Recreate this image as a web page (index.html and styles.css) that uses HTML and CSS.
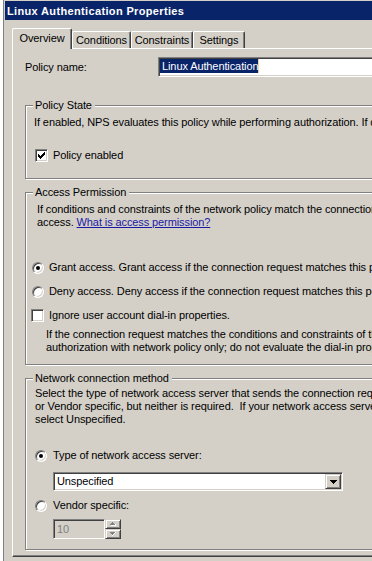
FILE: index.html
```html
<!DOCTYPE html>
<html>
<head>
<meta charset="utf-8">
<title>Linux Authentication Properties</title>
<link rel="stylesheet" href="styles.css">
</head>
<body>
<div class="screen">
  <div class="backwin"></div>
  <div class="window">
    <div class="titlebar">Linux Authentication Properties</div>
    <div class="client">
      <div class="tabs">
        <div class="tab tab-overview active">Overview</div>
        <div class="tab tab-conditions">Conditions</div>
        <div class="tab tab-constraints">Constraints</div>
        <div class="tab tab-settings">Settings</div>
      </div>
      <div class="panel">
        <div class="name-row">
          <span class="name-label">Policy name:</span>
          <div class="edit"><span class="selection">Linux Authentication</span></div>
        </div>

        <fieldset class="group group-state">
          <legend>Policy State</legend>
          <div class="state-body">
            <p class="line">If enabled, NPS evaluates this policy while performing authorization. If disabled, NPS does not evaluate this policy.</p>
            <div class="check-row state-check">
              <span class="checkbox"><svg class="checkmark" width="11" height="11" viewBox="0 0 11 11"><path d="M2 4h1v3H2z M3 5h1v3H3z M4 6h1v3H4z M5 5h1v3H5z M6 4h1v3H6z M7 3h1v3H7z M8 2h1v3H8z"/></svg></span>
              <span class="line">Policy enabled</span>
            </div>
          </div>
        </fieldset>

        <fieldset class="group group-access">
          <legend>Access Permission</legend>
          <div class="access-body">
            <div class="intro">
              <p class="line">If conditions and constraints of the network policy match the connection request, the policy can either grant access or deny</p>
              <p class="line">access. <a class="link" href="#">What is access permission?</a></p>
            </div>
            <div class="radio-row grant-row">
              <span class="radio checked"></span>
              <span class="line">Grant access. Grant access if the connection request matches this policy.</span>
            </div>
            <div class="radio-row deny-row">
              <span class="radio"></span>
              <span class="line">Deny access. Deny access if the connection request matches this policy.</span>
            </div>
            <div class="check-row ignore-row">
              <span class="checkbox"></span>
              <span class="line">Ignore user account dial-in properties.</span>
            </div>
            <div class="desc">
              <p class="line">If the connection request matches the conditions and constraints of this network policy and the policy grants access, perform</p>
              <p class="line">authorization with network policy only; do not evaluate the dial-in properties of user accounts.</p>
            </div>
          </div>
        </fieldset>

        <fieldset class="group group-network">
          <legend>Network connection method</legend>
          <div class="network-body">
            <p class="line">Select the type of network access server that sends the connection request to NPS. You can select either the network access server type</p>
            <p class="line">or Vendor specific, but neither is required.&nbsp; If your network access server is an 802.1X authenticating switch or wireless access point,</p>
            <p class="line">select Unspecified.</p>
            <div class="radio-row net-row type-row">
              <span class="radio checked"></span>
              <span class="line">Type of network access server:</span>
            </div>
            <div class="combo">
              <span class="combo-text">Unspecified</span>
              <span class="combo-btn"><svg width="7" height="4" viewBox="0 0 7 4"><path d="M0 0h7v1H0z M1 1h5v1H1z M2 2h3v1H2z M3 3h1v1H3z"/></svg></span>
            </div>
            <div class="radio-row net-row vendor-row">
              <span class="radio"></span>
              <span class="line">Vendor specific:</span>
            </div>
            <div class="spinner">
              <span class="spin-edit">10</span>
              <span class="spin-btns">
                <span class="spin-btn"><svg class="spin-arrow" width="6" height="4" viewBox="0 0 6 4"><path d="M2 0h1v1H2z M1 1h3v1H1z M0 2h5v1H0z" fill="#808080"/><path d="M5 2h1v1H5z M1 3h5v1H1z" fill="#fff"/></svg></span>
                <span class="spin-btn"><svg class="spin-arrow" width="6" height="4" viewBox="0 0 6 4"><path d="M0 0h5v1H0z M1 1h3v1H1z M2 2h1v1H2z" fill="#808080"/><path d="M5 0h1v1H5z M4 1h1v1H4z M3 2h1v1H3z M2 3h1v1H2z" fill="#fff"/></svg></span>
              </span>
            </div>
          </div>
        </fieldset>
      </div>
    </div>
  </div>
</div>
</body>
</html>
```

FILE: styles.css
```css
* {
  box-sizing: border-box;
}

html,
body {
  margin: 0;
  padding: 0;
}

body {
  width: 372px;
  height: 561px;
  overflow: hidden;
  background: #d4d0c8;
  font-family: "Liberation Sans", Arial, sans-serif;
  font-size: 11px;
  line-height: 13px;
  letter-spacing: -0.1px;
  color: #000;
}

.screen {
  display: flex;
  height: 561px;
}

.backwin {
  flex: 0 0 4px;
  background: #fff;
  border-right: 1px solid #808080;
}

.window {
  flex: 0 0 560px;
  padding: 1px 0 0 1px;
  background: #d4d0c8;
}

.titlebar {
  height: 19px;
  padding: 2px 0 0 2px;
  line-height: 17px;
  background: #0a246a;
  color: #fff;
  font-weight: bold;
  letter-spacing: 0.35px;
  white-space: nowrap;
}

.client {
  padding: 8px 0 0 7px;
}

/* tabs */
.tabs {
  display: flex;
  align-items: flex-end;
  height: 20px;
}

.tab {
  height: 17px;
  padding-top: 2px;
  border-top: 1px solid #fff;
  border-left: 1px solid #fff;
  border-right: 1px solid #404040;
  border-radius: 2px 2px 0 0;
  box-shadow: inset -1px 0 #808080;
  text-align: center;
  white-space: nowrap;
}

.tab.active {
  position: relative;
  z-index: 1;
  height: 21px;
  padding-top: 3px;
  margin-bottom: -1px;
  background: #d4d0c8;
}

.tab-overview { width: 60px; }
.tab-conditions { width: 59px; }
.tab-constraints { width: 62px; }
.tab-settings { width: 52px; }

/* tab page */
.panel {
  width: 540px;
  padding: 8px 0 6px 12px;
  border-top: 1px solid #fff;
  border-left: 1px solid #fff;
  border-bottom: 1px solid #404040;
  box-shadow: inset 0 -1px #808080;
}

.line {
  margin: 0;
  white-space: nowrap;
}

.name-row {
  display: flex;
  align-items: center;
  height: 20px;
}

.name-label {
  flex: 0 0 133px;
  white-space: nowrap;
}

.edit {
  flex: 0 0 380px;
  height: 20px;
  padding: 1px 0 0 1px;
  border: 1px solid;
  border-color: #808080 #fff #fff #808080;
  box-shadow: inset 1px 1px #404040, inset -1px -1px #d4d0c8;
  background: #fff;
}

.selection {
  display: inline-block;
  vertical-align: top;
  height: 14px;
  line-height: 15px;
  padding: 0 0 0 2px;
  background: #0a246a;
  color: #fff;
  border-right: 1px solid #e8d8a0;
  white-space: nowrap;
}

/* group boxes */
.group {
  width: 420px;
  min-width: 0;
  margin: 0;
  padding: 0;
  border: 1px solid #808080;
  box-shadow: inset 1px 1px #fff, 1px 1px #fff;
}

.group legend {
  margin-left: 7px;
  padding: 0 3px 0 2px;
  line-height: 13px;
  background: #d4d0c8;
  white-space: nowrap;
}

.group-state { margin-top: 22px; }
.group-access { margin-top: 7px; }
.group-network { margin-top: 7px; }

.state-body {
  padding: 4px 0 16px 8px;
}

.state-check {
  margin: 20px 0 0 1px;
}

.access-body {
  padding: 4px 0 10px 5px;
}

.intro {
  margin-left: 6px;
}

.link {
  color: #1a1aa6;
  text-decoration: underline;
}

.grant-row {
  margin: 32px 0 0 1px;
}

.deny-row {
  margin: 11px 0 0 1px;
}

.ignore-row {
  margin-top: 11px;
}

.desc {
  margin: 6px 0 0 15px;
}

.network-body {
  padding: 2px 0 10px 9px;
}

.type-row {
  margin-top: 23px;
}

.vendor-row {
  margin-top: 8px;
}

/* controls */
.check-row,
.radio-row {
  display: flex;
  align-items: center;
  height: 13px;
  gap: 5px;
}

.net-row {
  gap: 6px;
}

.checkbox {
  flex: 0 0 13px;
  height: 13px;
  border: 1px solid;
  border-color: #808080 #fff #fff #808080;
  box-shadow: inset 1px 1px #404040, inset -1px -1px #d4d0c8;
  background: #fff;
}

.checkmark {
  display: block;
  fill: #000;
}

.radio {
  flex: 0 0 12px;
  height: 12px;
  display: flex;
  align-items: center;
  justify-content: center;
  border: 1px solid;
  border-color: #808080 #fff #fff #808080;
  border-radius: 50%;
  box-shadow: inset 1px 1px #404040, inset -1px -1px #d4d0c8;
  background: #fff;
}

.radio.checked::after {
  content: "";
  width: 4px;
  height: 4px;
  border-radius: 50%;
  background: #000;
}

.combo {
  display: flex;
  width: 290px;
  height: 19px;
  margin: 10px 0 0 18px;
  padding: 1px;
  border: 1px solid;
  border-color: #808080 #fff #fff #808080;
  box-shadow: inset 1px 1px #404040, inset -1px -1px #d4d0c8;
  background: #fff;
}

.combo-text {
  flex: 1;
  padding: 1px 0 0 2px;
  white-space: nowrap;
}

.combo-btn {
  flex: 0 0 16px;
  display: flex;
  align-items: center;
  justify-content: center;
  border: 1px solid;
  border-color: #d4d0c8 #404040 #404040 #d4d0c8;
  box-shadow: inset 1px 1px #fff, inset -1px -1px #808080;
  background: #d4d0c8;
}

.combo-btn svg {
  display: block;
  fill: #000;
}

.spinner {
  display: flex;
  height: 20px;
  margin: 7px 0 0 18px;
}

.spin-edit {
  width: 52px;
  height: 20px;
  padding: 3px 0 0 3px;
  border: 1px solid;
  border-color: #808080 #fff #fff #808080;
  box-shadow: inset 1px 1px #404040, inset -1px -1px #d4d0c8;
  background: #d4d0c8;
  color: #808080;
}

.spin-btns {
  display: flex;
  flex-direction: column;
  width: 16px;
  height: 20px;
}

.spin-btn {
  flex: 1;
  display: flex;
  align-items: center;
  justify-content: center;
  border: 1px solid;
  border-color: #d4d0c8 #404040 #404040 #d4d0c8;
  box-shadow: inset 1px 1px #fff, inset -1px -1px #808080;
  background: #d4d0c8;
}

.spin-arrow {
  display: block;
}
```
